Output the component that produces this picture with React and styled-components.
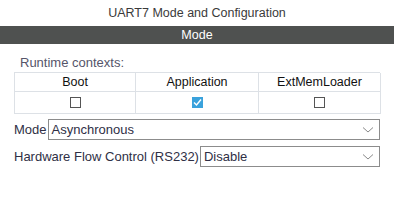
import React from "react";
import styled, { createGlobalStyle } from "styled-components";

const Global = createGlobalStyle`
  body {
    margin: 0;
    background: #fff;
    font-family: "Liberation Sans", Arial, sans-serif;
    font-size: 12px;
  }
`;

const Page = styled.div`
  width: 394px;
  height: 203px;
  background: #fff;
`;

const Title = styled.div`
  height: 26px;
  line-height: 26px;
  text-align: center;
  color: #3a3a3a;
  font-size: 12.5px;
`;

const Bar = styled.div`
  height: 18px;
  line-height: 18px;
  background: #4f5150;
  color: #fff;
  text-align: center;
  font-size: 12.5px;
`;

const Body = styled.div`
  padding: 10px 14px 0 14px;
`;

const Caption = styled.div`
  margin-left: 6px;
  height: 18px;
  line-height: 17px;
  color: #55556a;
  font-size: 13px;
`;

const Table = styled.div`
  display: grid;
  grid-template-columns: 121px 123px 122px;
  border-top: 1px solid #dde1e6;
  border-left: 1px solid #dde1e6;
`;

const Cell = styled.div`
  height: ${(p) => (p.$head ? "18px" : "21px")};
  border-right: 1px solid #dde1e6;
  border-bottom: 1px solid #dde1e6;
  display: flex;
  align-items: center;
  justify-content: center;
  color: #111;
  font-size: 12.5px;
`;

const Box = styled.span`
  width: 11px;
  height: 11px;
  box-sizing: border-box;
  border: 1px solid #555;
  background: ${(p) => (p.$on ? "#3aa2dc" : "#fff")};
  border-color: ${(p) => (p.$on ? "#3aa2dc" : "#555")};
  display: flex;
  align-items: center;
  justify-content: center;
`;

const Row = styled.div`
  display: flex;
  align-items: center;
  margin-top: ${(p) => p.$top}px;
  height: 21px;
`;

const Label = styled.span`
  color: #2f2f45;
  font-size: 13px;
  margin-right: 1px;
`;

const Select = styled.div`
  flex: 1;
  height: 21px;
  box-sizing: border-box;
  border: 1px solid #8c8c8c;
  display: flex;
  align-items: center;
  justify-content: space-between;
  padding: 0 5px 0 3px;
  color: #2f2f45;
  font-size: 13px;
`;

const Chevron = () => (
  <svg width="12" height="8" viewBox="0 0 12 8">
    <path d="M1 1.5 L6 6 L11 1.5" fill="none" stroke="#8a8a8a" strokeWidth="1" />
  </svg>
);

const Check = () => (
  <svg width="9" height="9" viewBox="0 0 9 9">
    <path d="M1 4.5 L3.5 7 L8 1.5" fill="none" stroke="#fff" strokeWidth="1.4" />
  </svg>
);

export default function App() {
  return (
    <Page>
      <Global />
      <Title>UART7 Mode and Configuration</Title>
      <Bar>Mode</Bar>
      <Body>
        <Caption>Runtime contexts:</Caption>
        <Table>
          <Cell $head>Boot</Cell>
          <Cell $head>Application</Cell>
          <Cell $head>ExtMemLoader</Cell>
          <Cell>
            <Box />
          </Cell>
          <Cell>
            <Box $on>
              <Check />
            </Box>
          </Cell>
          <Cell>
            <Box />
          </Cell>
        </Table>
        <Row $top={5}>
          <Label>Mode</Label>
          <Select>
            <span>Asynchronous</span>
            <Chevron />
          </Select>
        </Row>
        <Row $top={6}>
          <Label>Hardware Flow Control (RS232)</Label>
          <Select>
            <span>Disable</span>
            <Chevron />
          </Select>
        </Row>
      </Body>
    </Page>
  );
}
